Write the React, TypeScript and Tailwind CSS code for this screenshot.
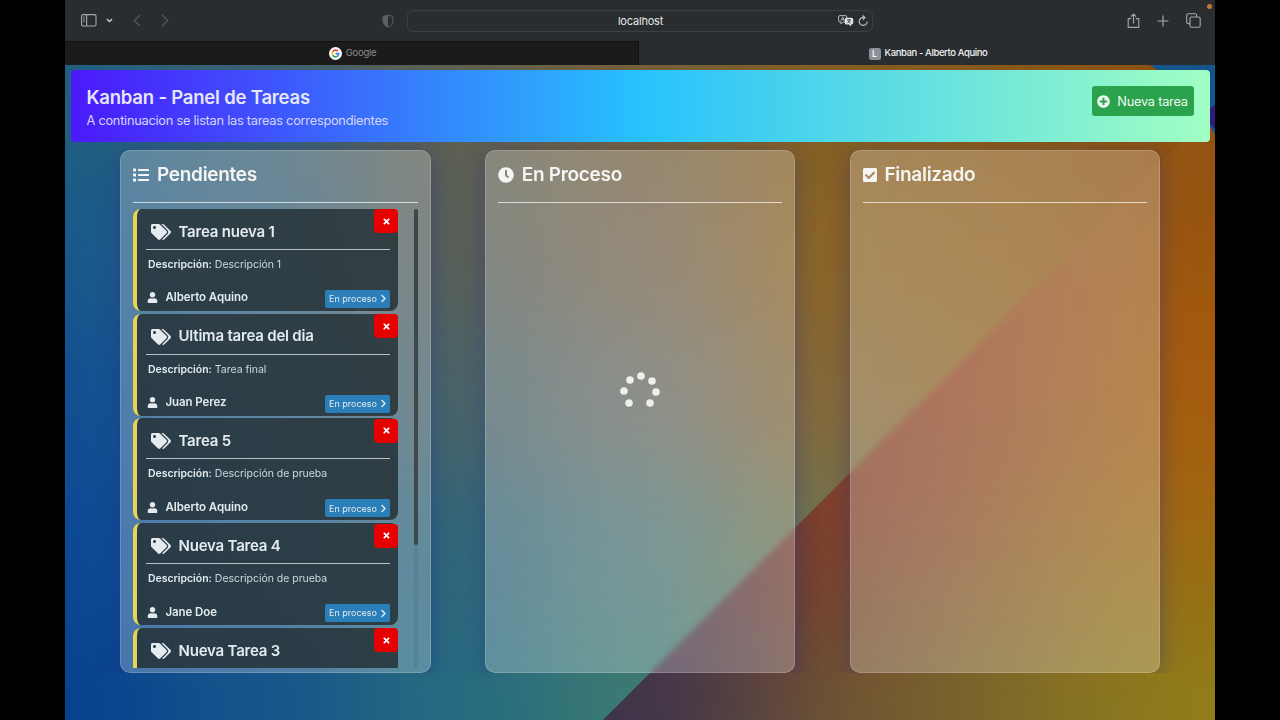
import {
  FaCheckSquare,
  FaChevronRight,
  FaClock,
  FaList,
  FaPlusCircle,
  FaTags,
  FaTimes,
  FaUser,
} from "react-icons/fa";
import type { ReactNode } from "react";

interface Task {
  title: string;
  description?: string;
  owner?: string;
}

interface MeshRow {
  y: number;
  colors: string[];
}

const tasks: Task[] = [
  { title: "Tarea nueva 1", description: "Descripción 1", owner: "Alberto Aquino" },
  { title: "Ultima tarea del dia", description: "Tarea final", owner: "Juan Perez" },
  { title: "Tarea 5", description: "Descripción de prueba", owner: "Alberto Aquino" },
  { title: "Nueva Tarea 4", description: "Descripción de prueba", owner: "Jane Doe" },
  { title: "Nueva Tarea 3" },
];

// left edges of the colour cells, first and last run past the page
const upperX = [-200, 92, 288, 482, 665, 845, 1035, 1400];
const upperMesh: MeshRow[] = [
  { y: -150, colors: ["#1f6080", "#3a6072", "#5e5f50", "#735f3a", "#825e24", "#885818", "#8c5010"] },
  { y: 110, colors: ["#17588c", "#335f7c", "#585f58", "#70624c", "#8b6426", "#8e5f1c", "#945010"] },
  { y: 260, colors: ["#0f4e92", "#285e88", "#486368", "#666a64", "#84683a", "#8f6626", "#a05810"] },
  { y: 410, colors: ["#0a4896", "#1c5888", "#2f657a", "#4b7474", "#6f7450", "#846838", "#a05810"] },
  { y: 560, colors: ["#07408f", "#14548a", "#256a80", "#3b7a72", "#5c7c5c", "#6f7450", "#a05810"] },
];

const lowerX = [400, 605, 705, 805, 905, 1000, 1090, 1400];
const lowerMesh: MeshRow[] = [
  { y: -150, colors: ["#90452a", "#90452a", "#96502a", "#965620", "#905c1c", "#925a1a", "#965210"] },
  { y: 185, colors: ["#90452a", "#90452a", "#90452a", "#984626", "#984c24", "#9a5a1c", "#a25808"] },
  { y: 285, colors: ["#6d3838", "#80402a", "#853f28", "#904528", "#965026", "#9a5c18", "#a85c0c"] },
  { y: 385, colors: ["#4a3448", "#65383a", "#803f28", "#8b482c", "#905624", "#986418", "#a36410"] },
  { y: 485, colors: ["#40334c", "#57394a", "#784228", "#825632", "#8a6024", "#92701c", "#967014"] },
  { y: 585, colors: ["#3d334a", "#4b3c46", "#6e5235", "#73602e", "#7d6c28", "#887820", "#927e1a"] },
];

function Mesh({ xs, rows }: { xs: number[]; rows: MeshRow[] }) {
  return (
    <>
      {rows.map((row, r) =>
        row.colors.map((color, c) => (
          <rect
            key={`${r}-${c}`}
            x={xs[c]}
            y={row.y}
            width={xs[c + 1] - xs[c] + 1}
            height={(rows[r + 1]?.y ?? 900) - row.y + 1}
            fill={color}
          />
        ))
      )}
    </>
  );
}

function Wallpaper() {
  return (
    <svg className="col-start-1 row-start-1" width="1150" height="655" viewBox="0 0 1150 655">
      <defs>
        <filter
          id="soft"
          filterUnits="userSpaceOnUse"
          x="-200"
          y="-150"
          width="1600"
          height="1050"
          colorInterpolationFilters="sRGB"
        >
          <feGaussianBlur stdDeviation="58 46" />
        </filter>
        <clipPath id="fold">
          <path d="M538 655 L1150 43 V655 Z" />
        </clipPath>
      </defs>
      <g filter="url(#soft)">
        <Mesh xs={upperX} rows={upperMesh} />
      </g>
      <g clipPath="url(#fold)">
        <g filter="url(#soft)">
          <Mesh xs={lowerX} rows={lowerMesh} />
        </g>
      </g>
      <path d="M1085 0 Q1125 25 1150 70 V0 Z" fill="#14568c" />
      <path d="M1135 50 L1150 40 V64 Z" fill="#2d1c7c" />
    </svg>
  );
}

function GoogleLogo() {
  return (
    <svg width="13" height="13" viewBox="0 0 26 26">
      <circle cx="13" cy="13" r="13" fill="#fff" />
      <g fill="none" strokeWidth="3.4">
        <path d="M7.3 9.6 A6.6 6.6 0 0 1 17.8 8.4" stroke="#ea4335" />
        <path d="M7.3 16.4 A6.6 6.6 0 0 1 7.3 9.6" stroke="#fbbc05" />
        <path d="M17.5 17.9 A6.6 6.6 0 0 1 7.3 16.4" stroke="#34a853" />
        <path d="M13 13.2 H19.6 A6.6 6.6 0 0 1 17.5 17.9" stroke="#4285f4" />
      </g>
    </svg>
  );
}

function Toolbar() {
  return (
    <div className="flex h-[41px] items-center bg-[#2a2d2f] pl-[15.5px] pr-[14px]">
      <div className="flex w-[326.5px] items-center text-[#a5a7a8]">
        <svg width="16" height="13" viewBox="0 0 16 13" fill="none" stroke="currentColor">
          <rect x="0.6" y="0.6" width="14.4" height="11.4" rx="1.5" strokeWidth="1.1" />
          <path d="M5.6 0.6 V12" strokeWidth="1.1" />
          <path d="M2 3.2 H4 M2 5.2 H4 M2 7.2 H4" strokeWidth="0.8" />
        </svg>
        <svg className="ml-[9px]" width="7" height="5" viewBox="0 0 7 5" fill="none" stroke="#d6d7d8" strokeWidth="1.3">
          <path d="M1 1 L3.5 3.6 L6 1" />
        </svg>
        <svg className="ml-5" width="8" height="13" viewBox="0 0 8 13" fill="none" stroke="#55585a" strokeWidth="1.2">
          <path d="M7 1 L1.2 6.5 L7 12" />
        </svg>
        <svg className="ml-[20px]" width="8" height="13" viewBox="0 0 8 13" fill="none" stroke="#55585a" strokeWidth="1.2">
          <path d="M1 1 L6.8 6.5 L1 12" />
        </svg>
        <svg className="ml-auto mr-[13px]" width="12" height="14" viewBox="0 0 12 14">
          <path d="M6 1 L11 2.6 V7 C11 10 9 12 6 13.2 C3 12 1 10 1 7 V2.6 Z" fill="none" stroke="#5c5f61" />
          <path d="M6 1 L1 2.6 V7 C1 10 3 12 6 13.2 Z" fill="#5c5f61" />
        </svg>
      </div>
      <div className="flex h-[22px] w-[466px] items-center justify-end rounded-[6px] border border-[#3d4042] pr-[3px]">
        <span className="flex-1 pl-[35px] pt-px text-center text-[11px] tracking-[-0.2px] text-[#e6e7e7]">localhost</span>
        <svg width="16" height="12" viewBox="0 0 16 12">
          <path d="M2 0.6 H7.4 A1.4 1.4 0 0 1 8.8 2 V7 H4.6 L3 8.8 V7 H2 A1.4 1.4 0 0 1 0.6 5.6 V2 A1.4 1.4 0 0 1 2 0.6 Z" fill="none" stroke="#c4c6c7" strokeWidth="0.9" />
          <path d="M3 5.8 L4.8 1.9 L6.6 5.8 M3.6 4.6 H6" fill="none" stroke="#c4c6c7" strokeWidth="0.8" />
          <path d="M8.4 2.8 H13.6 A1.6 1.6 0 0 1 15.2 4.4 V8 A1.6 1.6 0 0 1 13.6 9.6 H13 V11.4 L11 9.6 H8.4 A1.6 1.6 0 0 1 6.8 8 V4.4 A1.6 1.6 0 0 1 8.4 2.8 Z" fill="#e0e1e1" />
          <path d="M9 5 H13 M11 4 V5 M9.4 8.2 L12.4 5.2 M9.8 5.8 L12.6 8.2" fill="none" stroke="#2a2d2f" strokeWidth="0.8" />
        </svg>
        <svg className="ml-1" width="11" height="12" viewBox="0 0 11 12" fill="none" stroke="#c4c6c7" strokeWidth="1.1">
          <path d="M6.4 2.6 A4 4 0 1 0 9.2 6.4" />
          <path d="M4.6 0.5 L6.9 2.6 L4.8 4.8" />
        </svg>
      </div>
      <div className="flex flex-1 items-center justify-end text-[#a5a7a8]">
        <svg width="13" height="16" viewBox="0 0 13 16" fill="none" stroke="currentColor" strokeWidth="1.1">
          <path d="M4.2 5.6 H1.2 V14.4 H11.8 V5.6 H8.8 M6.5 10.4 V1.2 M3.9 3.7 L6.5 1.1 L9.1 3.7" />
        </svg>
        <svg className="ml-[17px]" width="12" height="12" viewBox="0 0 12 12" stroke="currentColor" strokeWidth="1.2">
          <path d="M6 0.6 V11.4 M0.6 6 H11.4" />
        </svg>
        <svg className="ml-[17px]" width="15" height="15" viewBox="0 0 15 15" fill="none" stroke="currentColor" strokeWidth="1.1">
          <path d="M3.8 10.6 H2.2 A1.5 1.5 0 0 1 0.7 9.1 V2.2 A1.5 1.5 0 0 1 2.2 0.7 H9.1 A1.5 1.5 0 0 1 10.6 2.2 V3.8" />
          <rect x="4" y="4" width="10.2" height="10.2" rx="1.5" />
        </svg>
      </div>
    </div>
  );
}

function TabBar() {
  return (
    <div className="flex h-6 text-[9.5px]">
      <div className="flex w-[574px] items-center justify-center gap-1 border-r border-t border-[#111213] bg-[#1b1b1b] pl-[2px] text-[#8b8b8b]">
        <GoogleLogo />
        <span className="tracking-[-0.3px]">Google</span>
      </div>
      <div className="flex flex-1 items-center justify-center gap-1 bg-[#2a2d2f] pl-[2px] pt-px font-medium text-[#f1f1f1]">
        <span className="flex size-3 items-center justify-center rounded-[2.5px] bg-[#8e8e98] text-[9px] leading-none text-white">
          L
        </span>
        <span className="tracking-[-0.4px]">Kanban - Alberto Aquino</span>
      </div>
    </div>
  );
}

function TaskCard({ task }: { task: Task }) {
  return (
    <div className="relative mb-[2.8px] h-[102px] shrink-0 rounded-lg border-l-4 border-[#e6d452] bg-[#202c2f]/80 pl-[9px] pr-2 text-[#e4ebef]">
      <button className="absolute right-0 top-[0.5px] flex size-6 items-center justify-center rounded bg-[#e60000] text-white">
        <FaTimes className="size-[9px]" />
      </button>
      <div className="flex h-[41px] items-center border-b border-[#b9c0c4] pl-[5px] pt-[6px]">
        <FaTags className="size-5" />
        <span className="ml-[7.5px] text-[15px] font-semibold tracking-[-0.2px]">{task.title}</span>
      </div>
      {task.owner && (
        <>
          <p className="mt-[7px] pl-[2px] text-[10.5px] leading-4 tracking-[-0.03px] text-[#d0d8dc]">
            <b className="font-semibold text-[#e4ebef]">Descripción:</b> {task.description}
          </p>
          <div className="mt-4 flex items-start justify-between pl-px">
            <div className="flex h-[18px] items-center">
              <FaUser className="size-[11px]" />
              <span className="ml-[7.5px] text-[11.5px] font-semibold tracking-[-0.08px]">{task.owner}</span>
            </div>
            <button className="mt-px flex h-[18px] w-[65px] items-center justify-between rounded-[2px] bg-[#2b7fb9] pl-1 pr-[2px] text-[9px]">
              <span>En proceso</span>
              <FaChevronRight className="size-[9px]" />
            </button>
          </div>
        </>
      )}
    </div>
  );
}

function Column({ icon, title, children }: { icon: ReactNode; title: string; children?: ReactNode }) {
  return (
    <section className="flex h-[523px] w-[310.5px] flex-col rounded-[10px] border border-white/[.18] bg-white/25 px-3 shadow-[0_5px_21px_rgba(31,38,135,0.37)] backdrop-blur-[3px]">
      <h2 className="flex h-[51.5px] shrink-0 items-center gap-2 border-b border-white/70 pb-[2px] text-[19px] font-semibold tracking-[-0.3px] text-[#f4f5f3]">
        <span className="pb-[2px]">{icon}</span>
        {title}
      </h2>
      {children}
    </section>
  );
}

function Spinner() {
  const dots = [
    [9, 34],
    [4, 22],
    [10, 11],
    [21, 7],
    [32, 12],
    [36, 23],
    [30, 34],
  ];
  return (
    <svg className="m-auto" width="42" height="42" viewBox="-1 -1 42 42" fill="#eef0ef">
      {dots.map(([x, y]) => (
        <circle key={`${x}-${y}`} cx={x} cy={y} r="3.8" />
      ))}
    </svg>
  );
}

function HandCursor() {
  return (
    <svg className="absolute left-[354px] top-[295px]" width="11" height="14" viewBox="0 0 11 14">
      <path
        d="M3 1.4 C3 0.2 4.8 0.2 4.8 1.4 V5.2 C5.4 4.6 6.5 4.8 6.6 5.6 C7.2 5 8.2 5.2 8.4 6 C9.2 5.5 10.2 6 10.2 7 V9.4 C10.2 11.2 9.2 12 9.2 13.4 H4.2 C4 12 1.6 10 0.8 8.4 C0.4 7.2 1.8 6.8 2.4 7.6 L3 8.2 Z"
        fill="#fff"
        stroke="#111"
        strokeWidth="0.7"
      />
      <path d="M5 8.6 V11.4 M6.6 8.6 V11.4 M8.2 8.6 V11.4" stroke="#333" strokeWidth="0.6" />
    </svg>
  );
}

export default function App() {
  return (
    <div className="relative flex h-[720px] w-[1280px] justify-center overflow-hidden bg-black font-['Inter','Liberation_Sans',sans-serif]">
      <div className="w-[1150px]">
        <Toolbar />
        <TabBar />
        <div className="grid h-[655px] w-[1150px] overflow-hidden">
          <Wallpaper />
          <main className="z-10 col-start-1 row-start-1 pt-[5.4px]">
            <header className="mx-[5.5px] flex h-[72px] items-start justify-between rounded bg-[linear-gradient(to_right,#4b19fb,#27c2fd,#a1ffc3)] px-4 pt-4">
              <div>
                <h1 className="text-[18.5px] font-semibold leading-[22px] tracking-[-0.2px] text-[#e6e6fc]">
                  Kanban - Panel de Tareas
                </h1>
                <p className="mt-[3px] text-[12.8px] leading-5 tracking-[-0.26px] text-[#d3d6fb]">
                  A continuacion se listan las tareas correspondientes
                </p>
              </div>
              <button className="flex h-[30px] w-[102px] items-center justify-center gap-[7px] rounded-[3px] bg-[#2ba24c] pt-px text-[12.8px] tracking-[-0.25px] text-[#effbf0]">
                <FaPlusCircle className="size-[13px]" />
                Nueva tarea
              </button>
            </header>
            {/* clips the column shadows along the bottom */}
            <div className="flex h-[531px] justify-between overflow-hidden px-[55px] pt-[7.9px]">
              <Column icon={<FaList className="size-4" />} title="Pendientes">
                <div className="mt-[6px] flex h-[459.5px] shrink-0 justify-between overflow-hidden">
                  <div className="flex w-[265px] flex-col">
                    {tasks.map((task) => (
                      <TaskCard key={task.title} task={task} />
                    ))}
                  </div>
                  <div className="w-1 bg-[#3d6078]/20">
                    <div className="h-[336px] rounded-full bg-[#3f474b]" />
                  </div>
                </div>
              </Column>
              <Column icon={<FaClock className="size-4" />} title="En Proceso">
                <Spinner />
                <div className="h-[97px]" />
              </Column>
              <Column icon={<FaCheckSquare className="h-4 w-[14px]" />} title="Finalizado" />
            </div>
          </main>
        </div>
      </div>
      <HandCursor />
      <span className="absolute left-[1207px] top-1 size-[5px] rounded-full bg-[#c07a3a]" />
    </div>
  );
}
